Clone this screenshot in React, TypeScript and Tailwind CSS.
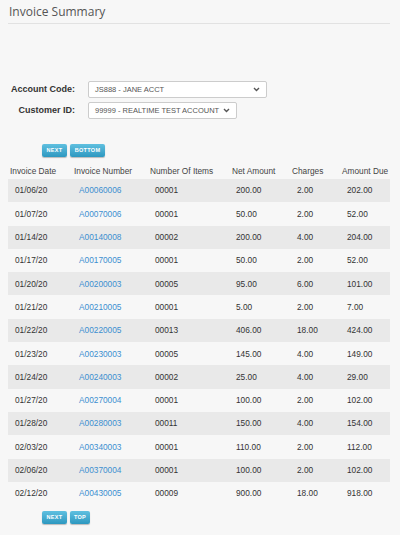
import React from 'react';

interface Row {
  date: string;
  number: string;
  items: string;
  net: string;
  charges: string;
  due: string;
}

const rows: Row[] = [
  { date: '01/06/20', number: 'A00060006', items: '00001', net: '200.00', charges: '2.00', due: '202.00' },
  { date: '01/07/20', number: 'A00070006', items: '00001', net: '50.00', charges: '2.00', due: '52.00' },
  { date: '01/14/20', number: 'A00140008', items: '00002', net: '200.00', charges: '4.00', due: '204.00' },
  { date: '01/17/20', number: 'A00170005', items: '00001', net: '50.00', charges: '2.00', due: '52.00' },
  { date: '01/20/20', number: 'A00200003', items: '00005', net: '95.00', charges: '6.00', due: '101.00' },
  { date: '01/21/20', number: 'A00210005', items: '00001', net: '5.00', charges: '2.00', due: '7.00' },
  { date: '01/22/20', number: 'A00220005', items: '00013', net: '406.00', charges: '18.00', due: '424.00' },
  { date: '01/23/20', number: 'A00230003', items: '00005', net: '145.00', charges: '4.00', due: '149.00' },
  { date: '01/24/20', number: 'A00240003', items: '00002', net: '25.00', charges: '4.00', due: '29.00' },
  { date: '01/27/20', number: 'A00270004', items: '00001', net: '100.00', charges: '2.00', due: '102.00' },
  { date: '01/28/20', number: 'A00280003', items: '00011', net: '150.00', charges: '4.00', due: '154.00' },
  { date: '02/03/20', number: 'A00340003', items: '00001', net: '110.00', charges: '2.00', due: '112.00' },
  { date: '02/06/20', number: 'A00370004', items: '00001', net: '100.00', charges: '2.00', due: '102.00' },
  { date: '02/12/20', number: 'A00430005', items: '00009', net: '900.00', charges: '18.00', due: '918.00' },
];

const cols = 'grid grid-cols-[64px_76px_82px_60px_50px_50px]';

const PagerButton: React.FC<{ label: string; width: string }> = ({ label, width }) => (
  <button
    className={`${width} h-[13px] rounded-[2px] bg-gradient-to-b from-[#5fc0e0] to-[#2c98c0] text-white font-bold text-[5.5px] tracking-[0.06em] leading-none shadow-[0_1px_1px_rgba(0,0,0,0.25)] flex items-center justify-center`}
  >
    {label}
  </button>
);

const Chevron = () => (
  <svg width="7" height="5" viewBox="0 0 7 5" className="text-[#555]">
    <path d="M1 1 L3.5 3.5 L6 1" fill="none" stroke="currentColor" strokeWidth="1.4" />
  </svg>
);

const Select: React.FC<{ value: string; width: string }> = ({ value, width }) => (
  <div
    className={`${width} h-[17px] bg-white border border-[#ccc] rounded-[2px] flex items-center justify-between pl-[6px] pr-[6px] text-[7.5px] text-[#555]`}
  >
    <span>{value}</span>
    <Chevron />
  </div>
);

export default function App() {
  return (
    <div
      className="w-[400px] h-[535px] bg-[#f7f7f7] text-[#333] overflow-hidden"
      style={{ fontFamily: '"Liberation Sans", Arial, sans-serif' }}
    >
      <div className="pl-[8px] w-[390px]">
        <div
          className="h-[24px] border-b border-[#e2e2e2] flex items-center pl-[1px] text-[12px] text-[#555]"
          style={{ fontFamily: '"Open Sans", sans-serif' }}
        >
          Invoice Summary
        </div>

        <div className="mt-[57px] flex flex-col gap-[4px]">
          <div className="flex items-center">
            <div className="w-[67px] text-right text-[9px] font-bold text-[#333]">Account Code:</div>
            <div className="ml-[13px]">
              <Select value="JS888 - JANE ACCT" width="w-[179px]" />
            </div>
          </div>
          <div className="flex items-center">
            <div className="w-[67px] text-right text-[9px] font-bold text-[#333]">Customer ID:</div>
            <div className="ml-[13px]">
              <Select value="99999 - REALTIME TEST ACCOUNT" width="w-[149px]" />
            </div>
          </div>
        </div>

        <div className="mt-[25px] ml-[34px] flex gap-[3px]">
          <PagerButton label="NEXT" width="w-[25px]" />
          <PagerButton label="BOTTOM" width="w-[35px]" />
        </div>

        <div className="mt-[7px] text-[8.3px]">
          <div className={`${cols} h-[15px] items-center text-[#444]`}>
            <div className="pl-[2px]">Invoice Date</div>
            <div className="pl-[2px]">Invoice Number</div>
            <div className="pl-[2px]">Number Of Items</div>
            <div className="pl-[2px]">Net Amount</div>
            <div className="pl-[2px]">Charges</div>
            <div className="pl-[2px]">Amount Due</div>
          </div>
          {rows.map((r, i) => (
            <div
              key={r.number}
              className={`${cols} h-[23.3px] items-center ${i % 2 === 0 ? 'bg-[#e9e9e9]' : ''}`}
            >
              <div className="pl-[7px]">{r.date}</div>
              <div className="pl-[7px] text-[#3c8fd0]">{r.number}</div>
              <div className="pl-[7px]">{r.items}</div>
              <div className="pl-[6px]">{r.net}</div>
              <div className="pl-[7px]">{r.charges}</div>
              <div className="pl-[7px]">{r.due}</div>
            </div>
          ))}
        </div>

        <div className="mt-[6px] ml-[34px] flex gap-[3px]">
          <PagerButton label="NEXT" width="w-[25px]" />
          <PagerButton label="TOP" width="w-[20px]" />
        </div>
      </div>
    </div>
  );
}
